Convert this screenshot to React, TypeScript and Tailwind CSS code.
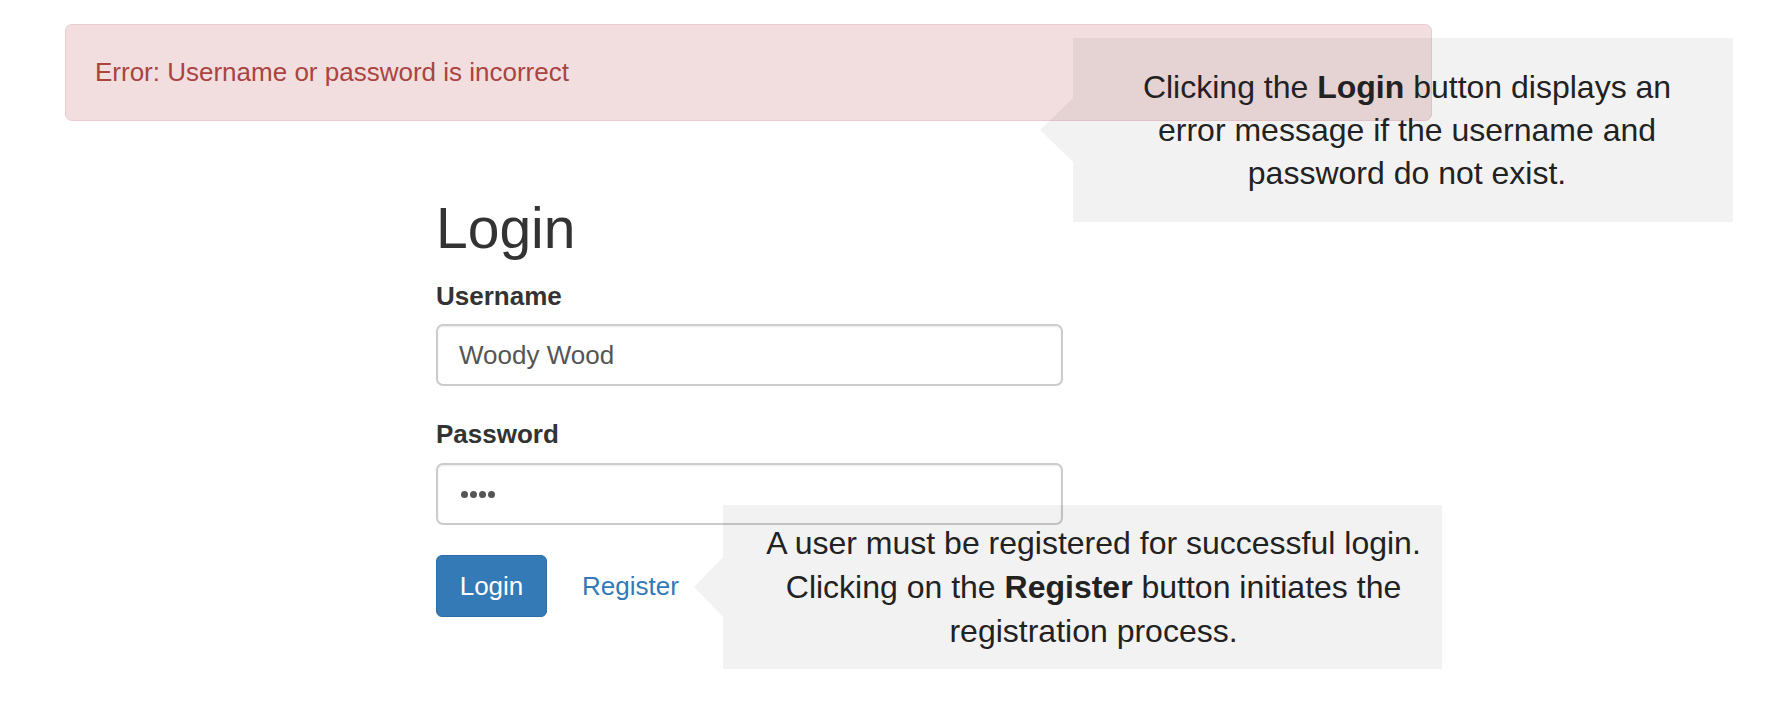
import React from "react";

function Callout({
  className,
  arrowClassName,
  children,
}: {
  className: string;
  arrowClassName: string;
  children: React.ReactNode;
}) {
  return (
    <div className={"absolute bg-black/5 flex items-center justify-center text-center text-[32px] text-[#222] " + className}>
      <span className={"absolute right-full w-0 h-0 border-y-transparent border-r-black/5 " + arrowClassName} />
      <p>{children}</p>
    </div>
  );
}

export default function App() {
  return (
    <div className="relative w-[1779px] h-[713px] bg-white overflow-hidden font-['Liberation_Sans',Arial,sans-serif]">
      <div className="pt-[24px] pl-[65px]">
        <div className="w-[1367px] h-[97px] flex items-center pl-[29px] border border-[#ebccd1] bg-[#f2dede] text-[#a94442] rounded-[7px] text-[26px]">
          Error: Username or password is incorrect
        </div>

        <form className="ml-[371px] mt-[76px] w-[627px] flex flex-col text-[#333]">
          <h2 className="text-[57px] leading-[62px] font-medium">Login</h2>

          <label className="mt-[19px] text-[26px] leading-[36px] font-bold">Username</label>
          <input
            readOnly
            value="Woody Wood"
            className="mt-[10px] h-[62px] w-full px-[21px] border-2 border-[#ccc] rounded-[7px] text-[26px] text-[#555] shadow-[inset_0_1px_2px_rgba(0,0,0,0.08)] outline-none"
          />

          <label className="mt-[30px] text-[26px] leading-[36px] font-bold">Password</label>
          <div className="mt-[11px] h-[62px] w-full px-[23px] border-2 border-[#ccc] rounded-[7px] flex items-center gap-[2px] shadow-[inset_0_1px_2px_rgba(0,0,0,0.08)]">
            {[0, 1, 2, 3].map((i) => (
              <span key={i} className="w-[7px] h-[7px] rounded-full bg-[#555]" />
            ))}
          </div>

          <div className="mt-[30px] flex items-center gap-[35px]">
            <button
              type="button"
              className="h-[62px] w-[111px] rounded-[6px] bg-[#337ab7] border border-[#2e6da4] text-white text-[26px]"
            >
              Login
            </button>
            <a className="text-[26px] text-[#337ab7]">Register</a>
          </div>
        </form>
      </div>

      <Callout
        className="left-[1073px] top-[38px] w-[660px] h-[184px] pl-[8px] leading-[43px]"
        arrowClassName="top-[60px] border-y-[32px] border-r-[33px]"
      >
        Clicking the <b>Login</b> button displays an
        <br />
        error message if the username and
        <br />
        password do not exist.
      </Callout>

      <Callout
        className="left-[723px] top-[505px] w-[719px] h-[164px] pl-[22px] leading-[44px]"
        arrowClassName="top-[52px] border-y-[30px] border-r-[29px]"
      >
        A user must be registered for successful login.
        <br />
        Clicking on the <b>Register</b> button initiates the
        <br />
        registration process.
      </Callout>
    </div>
  );
}
